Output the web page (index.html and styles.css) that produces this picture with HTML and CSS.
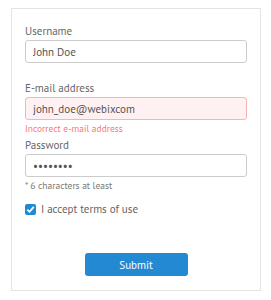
FILE: index.html
```html
<!doctype html>
<html lang="en">

<head>
  <meta charset="utf-8" />
  <meta name="viewport" content="width=device-width,initial-scale=1" />
  <title>Form</title>
  <link rel="stylesheet" href="styles.css">
</head>

<body>
  <form class="form">
    <label class="label" for="username">Username</label>
    <input class="text" id="username" type="text" value="John Doe">

    <label class="label label-gap" for="email">E-mail address</label>
    <input class="text invalid" id="email" type="text" value="john_doe@webixcom">
    <div class="error">Incorrect e-mail address</div>

    <label class="label" for="password">Password</label>
    <input class="text" id="password" type="password" value="12345678">
    <div class="hint">* 6 characters at least</div>

    <label class="check">
      <span class="box">
        <svg width="9" height="9" viewBox="0 0 9 9"><path d="M1.3 4.6 L3.5 6.8 L7.8 1.9" fill="none" stroke="#fff" stroke-width="1.8" /></svg>
      </span>
      I accept terms of use
    </label>

    <div class="actions">
      <button type="button" class="submit">Submit</button>
    </div>
  </form>
</body>

</html>
```

FILE: styles.css
```css
html,
body {
  margin: 0;
  padding: 0;
  background: #fff;
}

* {
  font-family: "PT Sans", Roboto, sans-serif;
  box-sizing: border-box;
}

.form {
  margin: 8px 11px 0 11px;
  width: 250px;
  height: 283px;
  border: solid 1px #e4e4e4;
  padding: 14px 13px 0 13px;
  display: flex;
  flex-direction: column;
}

.label {
  display: block;
  height: 17px;
  line-height: 17px;
  font-size: 11px;
  color: #666;
}

.label-gap {
  margin-top: 17px;
}

.text {
  display: block;
  width: 222px;
  height: 23px;
  margin: 0;
  padding: 0 7px;
  border: solid 1px #ccc;
  border-radius: 3px;
  font-size: 11px;
  color: #555;
  background: #fff;
  outline: none;
}

.text.invalid {
  background: #fff1f1;
  border-color: #f7b4b4;
}

.error,
.hint {
  height: 17px;
  line-height: 17px;
  font-size: 9.5px;
}

.error {
  color: #ff7373;
}

.hint {
  color: #777;
}

.check {
  margin-top: 7px;
  height: 16px;
  display: flex;
  align-items: center;
  gap: 5px;
  font-size: 11px;
  color: #666;
}

.check .box {
  width: 11px;
  height: 11px;
  border-radius: 2px;
  background: #1f8ad3;
  display: flex;
  align-items: center;
  justify-content: center;
}

.actions {
  margin-top: 36px;
  display: flex;
  justify-content: center;
}

.submit {
  width: 103px;
  height: 23px;
  border: none;
  border-radius: 3px;
  background: #2489d3;
  color: #fff;
  font-size: 11px;
  cursor: pointer;
}
```
